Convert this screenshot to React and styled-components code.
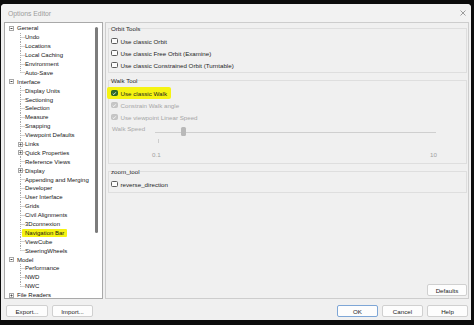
import React from "react";
import styled, { createGlobalStyle } from "styled-components";

const GlobalStyle = createGlobalStyle`
  html, body {
    margin: 0;
    padding: 0;
    background: #0c0c0c;
  }
  body {
    font-family: "Liberation Sans", Arial, sans-serif;
    font-size: 6.2px;
  }
  * {
    box-sizing: border-box;
  }
`;

const tree = [
  { label: "General", root: true },
  { label: "Undo" },
  { label: "Locations" },
  { label: "Local Caching" },
  { label: "Environment" },
  { label: "Auto-Save", last: true },
  { label: "Interface", root: true },
  { label: "Display Units" },
  { label: "Sectioning" },
  { label: "Selection" },
  { label: "Measure" },
  { label: "Snapping" },
  { label: "Viewpoint Defaults" },
  { label: "Links", closed: true },
  { label: "Quick Properties", closed: true },
  { label: "Reference Views" },
  { label: "Display", closed: true },
  { label: "Appending and Merging" },
  { label: "Developer" },
  { label: "User Interface" },
  { label: "Grids" },
  { label: "Civil Alignments" },
  { label: "3Dconnexion" },
  { label: "Navigation Bar", marked: true },
  { label: "ViewCube" },
  { label: "SteeringWheels", last: true },
  { label: "Model", root: true },
  { label: "Performance" },
  { label: "NWD" },
  { label: "NWC", last: true },
  { label: "File Readers", root: true, closed: true },
];

const Window = styled.div`
  margin: 4px 3px 0 1px;
  width: 470px;
  height: 316px;
  background: #f0f0f0;
  border-radius: 4px 4px 0 0;
  display: flex;
  flex-direction: column;
  overflow: hidden;
`;

const TitleBar = styled.div`
  height: 18px;
  flex: none;
  display: flex;
  align-items: center;
  justify-content: space-between;
  padding: 0 5px 0 7px;
  background: #f2f2f2;
  color: #9b9b9b;
  font-size: 6.8px;
`;

const Main = styled.div`
  height: 277px;
  flex: none;
  display: flex;
  gap: 2px;
  padding: 0 2px 0 3px;
`;

const TreePanel = styled.div`
  width: 99px;
  flex: none;
  display: flex;
  background: #fff;
  border: 1px solid #a9a9a9;
  overflow: hidden;
`;

const TreeList = styled.div`
  flex: 1;
  min-width: 0;
  padding-top: 1px;
  overflow: hidden;
  font-size: 6px;
`;

const Scrollbar = styled.div`
  width: 8px;
  flex: none;
  padding: 4px 0 0 1px;
`;

const Thumb = styled.div`
  width: 3px;
  height: 206px;
  border-radius: 2px;
  background: #7c7c7c;
`;

const TreeRow = styled.div`
  display: flex;
  align-items: center;
  height: 8.9px;
  white-space: nowrap;
  color: #151515;
`;

const Spacer = styled.span`
  flex: none;
  width: ${(p) => p.$w}px;
`;

const Guide = styled.svg`
  flex: none;
  display: block;
  overflow: visible;
`;

const Label = styled.span`
  line-height: 8px;
  padding: 0 ${(p) => (p.$marked ? 3 : 0)}px;
  margin-left: ${(p) => (p.$marked ? -3 : 0)}px;
  background: ${(p) => (p.$marked ? "#f5f312" : "transparent")};
  border-radius: 1px;
`;

const RightPanel = styled.div`
  width: 364px;
  flex: none;
  display: flex;
  flex-direction: column;
  border: 1px solid #cdcdcd;
  padding: 1px 1px 1px 2px;
  color: #222;
`;

const Group = styled.fieldset`
  margin: ${(p) => (p.$first ? 0 : 3)}px 0 0 0;
  padding: 2px 2px ${(p) => p.$bottom || 1}px 2px;
  border: 1px solid #dedede;
  min-width: 0;
`;

const Legend = styled.legend`
  padding: 0;
  line-height: 9px;
  color: #262626;
`;

const CheckRow = styled.div`
  display: flex;
  align-items: center;
  height: 12px;
`;

const Marker = styled.span`
  display: inline-flex;
  align-items: center;
  gap: 3px;
  height: 12px;
  padding: 0 4px;
  margin-left: -4px;
  background: ${(p) => (p.$on ? "#f5f312" : "transparent")};
  border-radius: 2px;
  color: ${(p) => (p.$disabled ? "#a6a6a6" : "#1e1e1e")};
`;

const Box = styled.span`
  width: 6.5px;
  height: 6.5px;
  flex: none;
  display: flex;
  align-items: center;
  justify-content: center;
  border-radius: 1.5px;
  border: 1px solid
    ${(p) =>
      p.$variant === "on" ? "#2b6327" : p.$variant === "off" ? "#5c5c5c" : "#c4c4c4"};
  background: ${(p) =>
    p.$variant === "on" ? "#2f6a2b" : p.$variant === "off" ? "#fbfbfb" : "#c6c6c6"};
`;

const SliderRow = styled.div`
  display: flex;
  height: 12px;
  color: #a8a8a8;
`;

const SliderLabel = styled.span`
  width: 44px;
  flex: none;
  line-height: 12px;
  padding-left: 1px;
`;

const Track = styled.div`
  position: relative;
  flex: 1;
  margin: 8.5px 28px 0 0;
  height: 1px;
  background: #cfcfcf;
`;

const SliderThumb = styled.div`
  position: absolute;
  left: ${(p) => p.$left}px;
  top: -5px;
  width: 5px;
  height: 9px;
  border-radius: 1.5px;
  background: #b9b9b9;
`;

const TickRow = styled.div`
  height: 11px;
  padding: 4px 0 0 47px;
`;

const Tick = styled.div`
  width: 1px;
  height: 4px;
  background: #cdcdcd;
`;

const ScaleRow = styled.div`
  display: flex;
  justify-content: space-between;
  height: 10px;
  margin-top: 4px;
  padding: 0 27px 0 41px;
  line-height: 10px;
  color: #a0a0a0;
`;

const Fill = styled.div`
  flex: 1;
`;

const Button = styled.button`
  width: ${(p) => p.$w || 41}px;
  height: 12px;
  flex: none;
  padding: 0;
  font-family: inherit;
  font-size: 6.2px;
  color: #1c1c1c;
  background: #fdfdfd;
  border: 1px solid ${(p) => (p.$primary ? "#7ea6d6" : "#d0d0d0")};
  border-radius: 2px;
`;

const DefaultsButton = styled(Button)`
  align-self: flex-end;
  margin-bottom: 1px;
`;

const Footer = styled.div`
  flex: 1;
  display: flex;
  gap: 4px;
  padding: 6px 3px 0 5px;
`;

const Push = styled.div`
  margin-left: auto;
`;

const CloseIcon = () => (
  <svg width="6" height="6" viewBox="0 0 6 6">
    <path d="M0.5 0.5L5.5 5.5M5.5 0.5L0.5 5.5" stroke="#858585" strokeWidth="0.8" />
  </svg>
);

const Expander = ({ closed, x }) => (
  <g>
    <rect x={x} y="2.5" width="4" height="4" fill="#fff" stroke="#a8a8a8" strokeWidth="1" />
    <path d={`M${x + 1} 4.5h2`} stroke="#4a4a4a" strokeWidth="1" />
    {closed && <path d={`M${x + 2} 3.5v2`} stroke="#4a4a4a" strokeWidth="1" />}
  </g>
);

const TreeItem = ({ item }) => {
  if (item.root) {
    return (
      <TreeRow>
        <Guide width="12" height="9" viewBox="0 0 12 9">
          <Expander closed={item.closed} x={4.5} />
        </Guide>
        <Label>{item.label}</Label>
      </TreeRow>
    );
  }
  return (
    <TreeRow>
      <Spacer $w={12} />
      <Guide width="8" height="9" viewBox="0 0 8 9">
        <path
          d={`M3.5 0V${item.last ? 4.5 : 9}M3.5 4.5H8`}
          stroke="#ababab"
          strokeWidth="1"
          strokeDasharray="1 1"
          fill="none"
        />
        {item.closed && <Expander closed x={1.5} />}
      </Guide>
      <Label $marked={item.marked}>{item.label}</Label>
    </TreeRow>
  );
};

const Check = ({ variant, label, marked }) => (
  <CheckRow>
    <Marker $on={marked} $disabled={variant === "disabled"}>
      <Box $variant={variant}>
        {variant !== "off" && (
          <svg width="5" height="5" viewBox="0 0 5 5">
            <path d="M0.8 2.6L2 3.7L4.2 1.2" stroke="#fff" strokeWidth="0.9" fill="none" />
          </svg>
        )}
      </Box>
      {label}
    </Marker>
  </CheckRow>
);

export default function App() {
  return (
    <>
      <GlobalStyle />
      <Window>
        <TitleBar>
          <span>Options Editor</span>
          <CloseIcon />
        </TitleBar>
        <Main>
          <TreePanel>
            <TreeList>
              {tree.map((item) => (
                <TreeItem key={item.label} item={item} />
              ))}
            </TreeList>
            <Scrollbar>
              <Thumb />
            </Scrollbar>
          </TreePanel>
          <RightPanel>
            <Group $first>
              <Legend>Orbit Tools</Legend>
              <Check variant="off" label="Use classic Orbit" />
              <Check variant="off" label="Use classic Free Orbit (Examine)" />
              <Check variant="off" label="Use classic Constrained Orbit (Turntable)" />
            </Group>
            <Group $bottom={3}>
              <Legend>Walk Tool</Legend>
              <Check variant="on" label="Use classic Walk" marked />
              <Check variant="disabled" label="Constrain Walk angle" />
              <Check variant="disabled" label="Use viewpoint Linear Speed" />
              <SliderRow>
                <SliderLabel>Walk Speed</SliderLabel>
                <Track>
                  <SliderThumb $left={26} />
                </Track>
              </SliderRow>
              <TickRow>
                <Tick />
              </TickRow>
              <ScaleRow>
                <span>0.1</span>
                <span>10</span>
              </ScaleRow>
            </Group>
            <Group $bottom={2}>
              <Legend>zoom_tool</Legend>
              <Check variant="off" label="reverse_direction" />
            </Group>
            <Fill />
            <DefaultsButton $w={40}>Defaults</DefaultsButton>
          </RightPanel>
        </Main>
        <Footer>
          <Button $w={42}>Export...</Button>
          <Button>Import...</Button>
          <Push />
          <Button $primary>OK</Button>
          <Button>Cancel</Button>
          <Button>Help</Button>
        </Footer>
      </Window>
    </>
  );
}
